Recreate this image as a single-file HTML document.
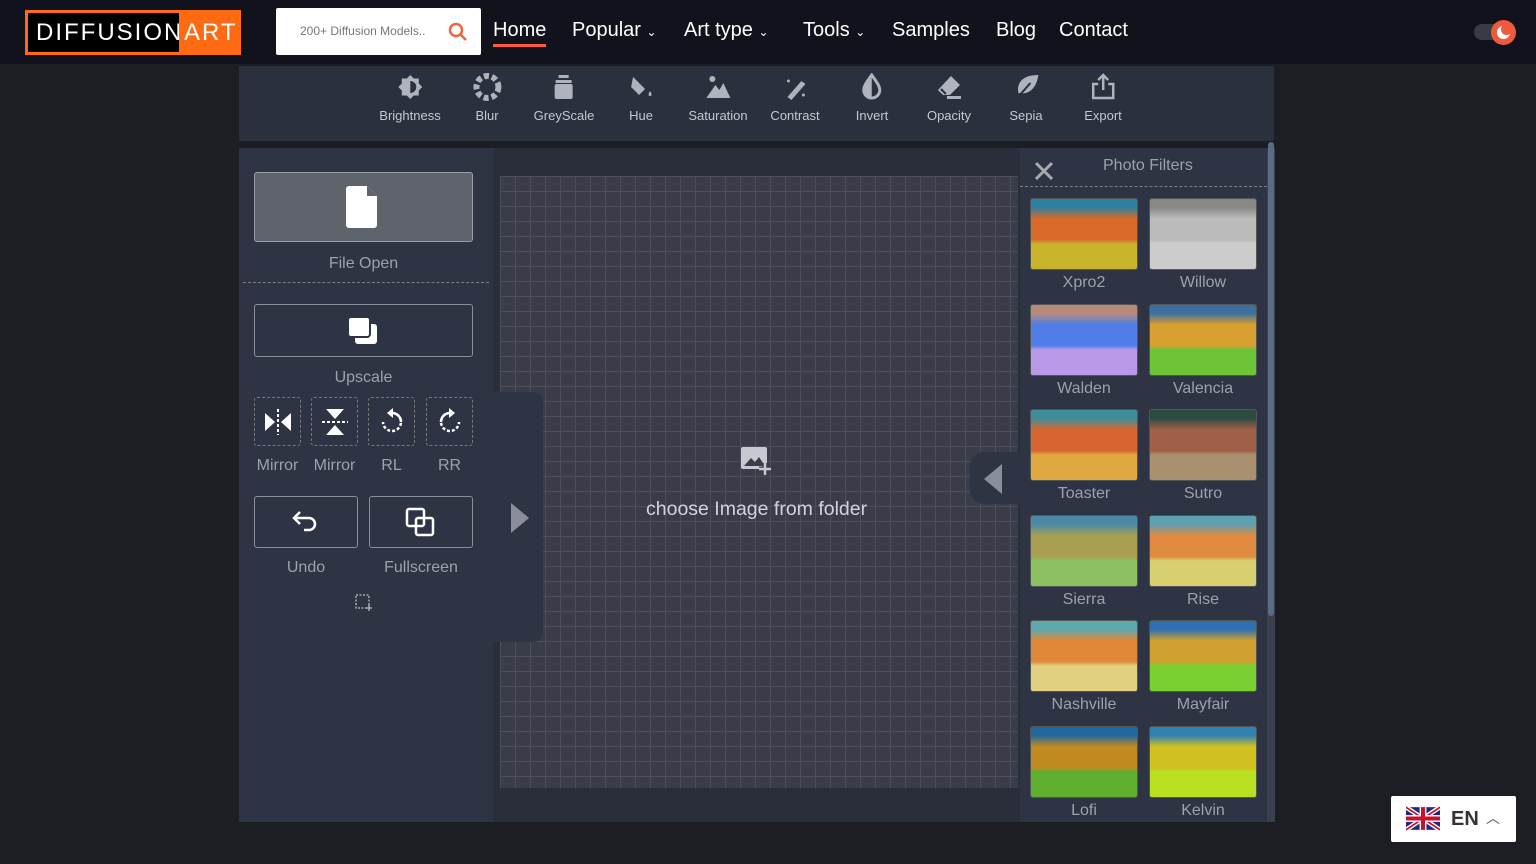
<!DOCTYPE html>
<html><head><meta charset="utf-8"><style>
*{margin:0;padding:0;box-sizing:border-box}
body{width:1536px;height:864px;background:#1c1e24;font-family:"Liberation Sans",sans-serif;position:relative;overflow:hidden;color:#fff}
.nav{position:absolute;left:0;top:0;width:1536px;height:64px;background:#12121d}
.logo{position:absolute;left:25px;top:10px;width:216px;height:45px;border:3px solid #ff6a13;background:#000;display:flex}
.logo span{font-size:24px;letter-spacing:2px;line-height:39px}
.logo .a{padding-left:8px;width:151px}
.logo .b{background:#ff6a13;flex:1;padding-left:5px}
.search{position:absolute;left:276px;top:8px;width:205px;height:47px;background:#fff;border-radius:2px;color:#777;font-size:12px;line-height:47px;padding-left:24px}
.menu{position:absolute;top:19px;font-size:20px;color:#fff}
.home{border-bottom:3px solid #ff5a3c;padding-bottom:2px}
.tb{position:absolute;left:239px;top:66px;width:1035px;height:75px;background:#2b303e}
.ti{position:absolute;top:42px;font-size:13px;color:#c4c8d0;transform:translateX(-50%);text-align:center}
.ti svg{display:block;position:absolute;top:-35px;left:50%;margin-left:-14px}
.lp{position:absolute;left:239px;top:148px;width:254px;height:674px;background:#2f3445}
.btn{position:absolute;border:1px solid #8a8f9c;border-radius:3px}
.lbl{position:absolute;font-size:16px;color:#9ca1ac;text-align:center}
.canvas{position:absolute;left:493px;top:148px;width:527px;height:674px;background:#2a2e3b}
.grid{position:absolute;left:500px;top:176px;width:518px;height:612px;background-color:#3a3c4a;background-image:linear-gradient(#4c4e5c 1px,transparent 1px),linear-gradient(90deg,#4c4e5c 1px,transparent 1px);background-size:15px 15px}
.rp{position:absolute;left:1020px;top:148px;width:247px;height:674px;background:#2f3445}
.th{position:absolute;width:108px;height:72px;border-radius:3px;overflow:hidden;border:1px solid #555}
.tl{position:absolute;width:108px;text-align:center;font-size:16px;color:#9ca1ac}
</style></head><body>
<div class="nav">
 <div class="logo"><span class="a">DIFFUSION</span><span class="b">ART</span></div>
 <div class="search">200+ Diffusion Models..<svg style="position:absolute;left:172px;top:14px" width="20" height="20" viewBox="0 0 20 20"><circle cx="8" cy="8" r="6" fill="none" stroke="#f0643c" stroke-width="2.5"/><path d="M12.5 12.5L18 18" stroke="#f0643c" stroke-width="2.5"/></svg></div>
 <span class="menu home" style="left:493px">Home</span>
 <span class="menu" style="left:572px">Popular <small style="font-size:12px">⌄</small></span>
 <span class="menu" style="left:684px">Art type <small style="font-size:12px">⌄</small></span>
 <span class="menu" style="left:803px">Tools <small style="font-size:12px">⌄</small></span>
 <span class="menu" style="left:892px">Samples</span>
 <span class="menu" style="left:996px">Blog</span>
 <span class="menu" style="left:1059px">Contact</span>
 <div style="position:absolute;left:1474px;top:24px;width:30px;height:16px;border-radius:8px;background:#3a3b46"></div>
 <div style="position:absolute;left:1491px;top:20px;width:25px;height:25px;border-radius:50%;background:#ee5a3c"><div style="position:absolute;left:6px;top:6px;width:13px;height:13px;border-radius:50%;background:#fff"></div><div style="position:absolute;left:10px;top:4px;width:11px;height:11px;border-radius:50%;background:#ee5a3c"></div></div>
</div>
<div class="tb">
 <div class="ti" style="left:171px"><svg width="28" height="28" viewBox="0 0 28 28"><path d="M14 2l3.5 3.5H22.5V10.5L26 14l-3.5 3.5V22.5H17.5L14 26l-3.5-3.5H5.5V17.5L2 14l3.5-3.5V5.5H10.5z" fill="#aeb3bd"/><path d="M14 8a6 6 0 0 1 0 12z" fill="#2b303e"/></svg>Brightness</div>
 <div class="ti" style="left:248px"><svg width="28" height="28" viewBox="0 0 28 28"><circle cx="14" cy="14" r="11" fill="none" stroke="#aeb3bd" stroke-width="6" stroke-dasharray="5 3"/></svg>Blur</div>
 <div class="ti" style="left:325px"><svg width="28" height="28" viewBox="0 0 28 28"><rect x="9" y="2" width="10" height="3" fill="#aeb3bd"/><rect x="6" y="7" width="16" height="3" fill="#aeb3bd"/><rect x="5" y="11" width="18" height="15" rx="2" fill="#aeb3bd"/></svg>GreyScale</div>
 <div class="ti" style="left:402px"><svg width="28" height="28" viewBox="0 0 28 28"><path d="M6 4l12 12-6 6-8-8z" fill="#aeb3bd"/><path d="M23 18c2 3 2 5 0 5s-2-2 0-5z" fill="#aeb3bd"/></svg>Hue</div>
 <div class="ti" style="left:479px"><svg width="28" height="28" viewBox="0 0 28 28"><circle cx="8" cy="6" r="3" fill="#aeb3bd"/><path d="M2 25l9-13 4 5 4-7 7 15z" fill="#aeb3bd"/></svg>Saturation</div>
 <div class="ti" style="left:556px"><svg width="28" height="28" viewBox="0 0 28 28"><path d="M6 24l14-16 4 3-14 16z" fill="#aeb3bd"/><circle cx="7" cy="8" r="1.5" fill="#aeb3bd"/><circle cx="22" cy="22" r="1.5" fill="#aeb3bd"/></svg>Contrast</div>
 <div class="ti" style="left:633px"><svg width="28" height="28" viewBox="0 0 28 28"><path d="M14 2c5 7 8 11 8 15a8 8 0 0 1-16 0c0-4 3-8 8-15z" fill="none" stroke="#aeb3bd" stroke-width="3"/><path d="M14 4v21a7 7 0 0 1-7-8c0-4 3-8 7-13z" fill="#aeb3bd"/></svg>Invert</div>
 <div class="ti" style="left:710px"><svg width="28" height="28" viewBox="0 0 28 28"><path d="M16 3l9 9-10 10H8l-5-5z" fill="#aeb3bd"/><path d="M6 16l5 5" stroke="#2b303e" stroke-width="2"/><rect x="12" y="23" width="14" height="3" fill="#aeb3bd"/></svg>Opacity</div>
 <div class="ti" style="left:787px"><svg width="28" height="28" viewBox="0 0 28 28"><path d="M26 2C10 2 4 10 6 20 16 22 24 16 26 2z" fill="#aeb3bd"/><path d="M4 26L18 10" stroke="#2b303e" stroke-width="2"/></svg>Sepia</div>
 <div class="ti" style="left:864px"><svg width="28" height="28" viewBox="0 0 28 28"><path d="M9 11H4v14h20V11h-5" fill="none" stroke="#aeb3bd" stroke-width="2.5"/><path d="M14 2v15M9 7l5-5 5 5" fill="none" stroke="#aeb3bd" stroke-width="2.5"/></svg>Export</div>
</div>
<div class="lp">
 <div class="btn" style="left:15px;top:24px;width:219px;height:70px;background:#5f636c;border-color:#9a9ea8"></div>
 <svg style="position:absolute;left:107px;top:38px" width="34" height="42" viewBox="0 0 34 42"><path d="M3 0h18l10 10v29a3 3 0 0 1-3 3H3a3 3 0 0 1-3-3V3a3 3 0 0 1 3-3z" fill="#fff"/><path d="M21 0v10h10z" fill="#5f636c"/></svg>
 <div class="lbl" style="left:15px;width:219px;top:107px">File Open</div>
 <div style="position:absolute;left:4px;top:134px;width:246px;border-top:1px dashed #7a7f8a"></div>
 <div class="btn" style="left:15px;top:156px;width:219px;height:53px"></div>
 <svg style="position:absolute;left:107px;top:168px" width="34" height="30" viewBox="0 0 34 30"><rect x="9" y="8" width="22" height="20" rx="3" fill="#fff"/><rect x="2" y="1" width="22" height="20" rx="3" fill="#fff" stroke="#2f3445" stroke-width="2"/></svg>
 <div class="lbl" style="left:15px;width:219px;top:221px">Upscale</div>
 <div class="btn" style="left:15px;top:249px;width:47px;height:49px;border:1px dashed #777"></div>
 <div class="btn" style="left:72px;top:249px;width:47px;height:49px;border:1px dashed #777"></div>
 <div class="btn" style="left:129px;top:249px;width:47px;height:49px;border:1px dashed #777"></div>
 <div class="btn" style="left:187px;top:249px;width:47px;height:49px;border:1px dashed #777"></div>
 <svg style="position:absolute;left:24px;top:259px" width="30" height="30" viewBox="0 0 30 30"><path d="M2 6l10 9-10 9z M28 6l-10 9 10 9z" fill="#fff"/><path d="M15 2v26" stroke="#fff" stroke-width="2" stroke-dasharray="3 2"/></svg>
 <svg style="position:absolute;left:81px;top:259px" width="30" height="30" viewBox="0 0 30 30"><path d="M6 2l9 10 9-10z M6 28l9-10 9 10z" fill="#fff"/><path d="M2 15h26" stroke="#fff" stroke-width="2" stroke-dasharray="3 2"/></svg>
 <svg style="position:absolute;left:138px;top:259px" width="30" height="30" viewBox="0 0 30 30"><path d="M15 6a9 9 0 1 1-9 9" fill="none" stroke="#fff" stroke-width="2.5" stroke-dasharray="3 2"/><path d="M15 6a9 9 0 0 1 9 9" fill="none" stroke="#fff" stroke-width="2.5"/><path d="M16 1v10l-6-5z" fill="#fff"/></svg>
 <svg style="position:absolute;left:196px;top:259px" width="30" height="30" viewBox="0 0 30 30"><path d="M15 6a9 9 0 1 0 9 9" fill="none" stroke="#fff" stroke-width="2.5" stroke-dasharray="3 2"/><path d="M15 6a9 9 0 0 0-9 9" fill="none" stroke="#fff" stroke-width="2.5"/><path d="M14 1v10l6-5z" fill="#fff"/></svg>
 <div class="lbl" style="left:15px;width:47px;top:309px">Mirror</div>
 <div class="lbl" style="left:72px;width:47px;top:309px">Mirror</div>
 <div class="lbl" style="left:129px;width:47px;top:309px">RL</div>
 <div class="lbl" style="left:187px;width:47px;top:309px">RR</div>
 <div class="btn" style="left:15px;top:348px;width:104px;height:52px"></div>
 <div class="btn" style="left:130px;top:348px;width:104px;height:52px"></div>
 <svg style="position:absolute;left:52px;top:362px" width="30" height="24" viewBox="0 0 30 24"><path d="M3 8h15a6 6 0 0 1 0 12h-5" fill="none" stroke="#fff" stroke-width="2.5"/><path d="M9 2L3 8l6 6" fill="none" stroke="#fff" stroke-width="2.5"/></svg>
 <svg style="position:absolute;left:165px;top:358px" width="32" height="32" viewBox="0 0 32 32"><rect x="3" y="3" width="17" height="17" rx="2" fill="none" stroke="#fff" stroke-width="2.5"/><rect x="12" y="12" width="17" height="17" rx="2" fill="none" stroke="#fff" stroke-width="2.5"/></svg>
 <div class="lbl" style="left:15px;width:104px;top:411px">Undo</div>
 <div class="lbl" style="left:130px;width:104px;top:411px">Fullscreen</div>
 <svg style="position:absolute;left:116px;top:446px" width="18" height="18" viewBox="0 0 18 18"><rect x="1" y="1" width="13" height="13" fill="none" stroke="#aaa" stroke-width="1.5" stroke-dasharray="2 1.5"/><path d="M14 11v6M11 14h6" stroke="#aaa" stroke-width="1.5"/></svg>
</div>
<div class="canvas"></div>
<div class="grid"></div>
<div style="position:absolute;left:493px;top:392px;width:50px;height:250px;background:#2f3445;border-radius:0 10px 10px 0"></div>
<svg style="position:absolute;left:511px;top:503px" width="18" height="30"><path d="M0 0l18 15-18 15z" fill="#8a8e99"/></svg>
<div style="position:absolute;left:970px;top:452px;width:50px;height:52px;background:#2f3445;border-radius:14px 0 0 14px"></div>
<svg style="position:absolute;left:984px;top:464px" width="18" height="30"><path d="M18 0L0 15l18 15z" fill="#8a8e99"/></svg>
<svg style="position:absolute;left:741px;top:447px" width="32" height="30" viewBox="0 0 32 30"><rect x="0" y="0" width="26" height="22" rx="2" fill="#c6c9d0"/><path d="M3 19l7-8 4 4 4-5 6 9z" fill="#3a3c4a"/><path d="M24 16v12M18 22h12" stroke="#3a3c4a" stroke-width="5"/><path d="M24 16v12M18 22h12" stroke="#c6c9d0" stroke-width="2.5"/></svg>
<div style="position:absolute;left:646px;top:498px;font-size:19.5px;color:#d0d3da">choose Image from folder</div>
<div class="rp">
 <svg style="position:absolute;left:14px;top:13px" width="20" height="20"><path d="M2 2l16 16M18 2L2 18" stroke="#aaa" stroke-width="3"/></svg>
 <div style="position:absolute;left:83px;top:9px;font-size:16px;color:#9ca1ac">Photo Filters</div>
 <div style="position:absolute;left:0;top:38px;width:247px;border-top:1px dashed #7a7f8a"></div>
</div>
<div style="position:absolute;left:1267px;top:148px;width:8px;height:674px;background:#3b4050"></div>
<div style="position:absolute;left:1268px;top:142px;width:6px;height:474px;background:#5b6b86;border-radius:3px"></div>
<div id="thumbs"></div>
<div style="position:absolute;left:1391px;top:796px;width:125px;height:46px;background:#fff;border-radius:2px">
 <svg style="position:absolute;left:15px;top:10px" width="34" height="25" viewBox="0 0 60 40"><rect width="60" height="40" fill="#1f2a7a"/><path d="M0 0l60 40M60 0L0 40" stroke="#fff" stroke-width="8"/><path d="M0 0l60 40M60 0L0 40" stroke="#c8102e" stroke-width="3"/><path d="M30 0v40M0 20h60" stroke="#fff" stroke-width="12"/><path d="M30 0v40M0 20h60" stroke="#c8102e" stroke-width="7"/></svg>
 <span style="position:absolute;left:60px;top:12px;font-size:20px;font-weight:bold;color:#333">EN</span>
 <span style="position:absolute;left:95px;top:12px;font-size:14px;color:#555">︿</span>
</div>
<script>
var f=[["Xpro2","#2f7fa0","#d86a2a","#c7b42a"],["Willow","#888","#bbb","#ccc"],["Walden","#b88a7a","#4f7ee8","#b89ae8"],["Valencia","#3d6fa0","#d8a030","#6cc436"],["Toaster","#3f8f9a","#d86530","#e0a840"],["Sutro","#2d4a40","#a06048","#a89070"],["Sierra","#4a8aa8","#a8a050","#8cc060"],["Rise","#5fa0b0","#e08a40","#d8d070"],["Nashville","#5ea8b0","#e08838","#e0d080"],["Mayfair","#2d6fb0","#d0a030","#7ad030"],["Lofi","#2068a0","#c08a20","#60b030"],["Kelvin","#3080b0","#d0c020","#b8e020"]];
var h="";f.forEach(function(t,i){var c=i%2,r=Math.floor(i/2);var x=1030+c*119,y=198+Math.round(r*105.6);
h+='<div class="th" style="left:'+x+'px;top:'+y+'px;background:linear-gradient('+t[1]+' 0%,'+t[1]+' 12%,'+t[2]+' 28%,'+t[2]+' 58%,'+t[3]+' 64%,'+t[3]+' 100%)"></div><div class="tl" style="left:'+x+'px;top:'+(y+76)+'px">'+t[0]+'</div>';});
document.getElementById("thumbs").innerHTML=h;
</script>
</body></html>
